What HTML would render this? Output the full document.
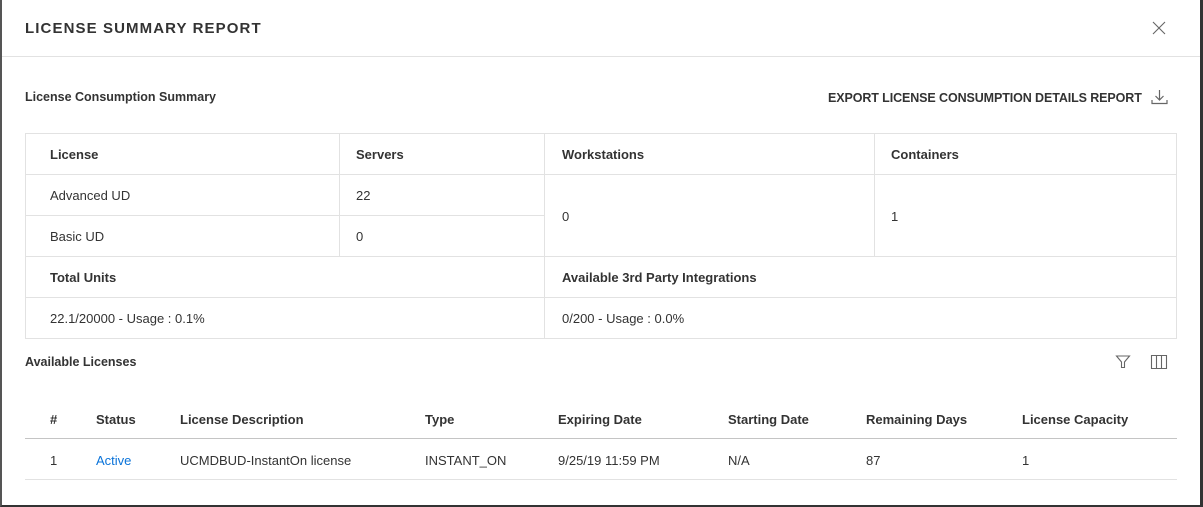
<!DOCTYPE html>
<html><head><style>
*{margin:0;padding:0;box-sizing:border-box}
body{width:1203px;height:507px;background:#fff;font-family:"Liberation Sans",sans-serif;color:#333;position:relative;overflow:hidden;font-size:13px}
.frame{position:absolute;left:0;top:0;width:1203px;height:507px;border-left:2px solid #555;border-right:3px solid #333;border-bottom:2px solid #333}
.a{position:absolute;white-space:nowrap}
.b{font-weight:bold}
.hl{position:absolute;background:#e2e2e2;height:1px}
.vl{position:absolute;background:#e2e2e2;width:1px}
</style></head><body>
<div class="frame"></div>
<div class="a b" style="left:25px;top:20px;font-size:15px;letter-spacing:1.1px;color:#333">LICENSE SUMMARY REPORT</div>
<svg class="a" style="left:1152px;top:21px" width="14" height="14"><path d="M1 1L13 13M13 1L1 13" stroke="#666" stroke-width="1.1"/></svg>
<div class="hl" style="left:2px;top:56px;width:1198px"></div>
<div class="a b" style="left:25px;top:90px;font-size:12.5px">License Consumption Summary</div>
<div class="a b" style="left:828px;top:91px;font-size:12.5px;letter-spacing:-0.1px">EXPORT LICENSE CONSUMPTION DETAILS REPORT</div>
<svg class="a" style="left:1151px;top:89px" width="17" height="16"><path d="M8.5 1V11M4.5 7L8.5 11L12.5 7M1 11V14.5H16V11" stroke="#666" stroke-width="1.2" fill="none"/></svg>
<div style="position:absolute;left:25px;top:133px;width:1152px;height:206px;border:1px solid #e2e2e2"></div>
<div class="hl" style="left:25px;top:174px;width:1152px"></div>
<div class="hl" style="left:25px;top:215px;width:520px"></div>
<div class="hl" style="left:25px;top:256px;width:1152px"></div>
<div class="hl" style="left:25px;top:297px;width:1152px"></div>
<div class="vl" style="left:339px;top:133px;height:124px"></div>
<div class="vl" style="left:544px;top:133px;height:206px"></div>
<div class="vl" style="left:874px;top:133px;height:124px"></div>
<div class="a b" style="left:50px;top:147px">License</div>
<div class="a b" style="left:356px;top:147px">Servers</div>
<div class="a b" style="left:562px;top:147px">Workstations</div>
<div class="a b" style="left:891px;top:147px">Containers</div>
<div class="a" style="left:50px;top:188px">Advanced UD</div>
<div class="a" style="left:356px;top:188px">22</div>
<div class="a" style="left:50px;top:229px">Basic UD</div>
<div class="a" style="left:356px;top:229px">0</div>
<div class="a" style="left:562px;top:209px">0</div>
<div class="a" style="left:891px;top:209px">1</div>
<div class="a b" style="left:50px;top:270px">Total Units</div>
<div class="a b" style="left:562px;top:270px">Available 3rd Party Integrations</div>
<div class="a" style="left:50px;top:311px">22.1/20000 - Usage : 0.1%</div>
<div class="a" style="left:562px;top:311px">0/200 - Usage : 0.0%</div>
<div class="a b" style="left:25px;top:355px;font-size:12.5px">Available Licenses</div>
<svg class="a" style="left:1115px;top:354px" width="16" height="16"><path d="M1.5 2H14.5L9.5 8V13.5H6.5V8Z" stroke="#666" stroke-width="1.1" fill="none"/></svg>
<svg class="a" style="left:1150px;top:354px" width="18" height="16"><path d="M1.5 1.5H16.5V14.5H1.5ZM6.5 1.5V14.5M11.5 1.5V14.5" stroke="#666" stroke-width="1.1" fill="none"/></svg>
<div class="a b" style="left:50px;top:412px">#</div>
<div class="a b" style="left:96px;top:412px">Status</div>
<div class="a b" style="left:180px;top:412px">License Description</div>
<div class="a b" style="left:425px;top:412px">Type</div>
<div class="a b" style="left:558px;top:412px">Expiring Date</div>
<div class="a b" style="left:728px;top:412px">Starting Date</div>
<div class="a b" style="left:866px;top:412px">Remaining Days</div>
<div class="a b" style="left:1022px;top:412px">License Capacity</div>
<div class="hl" style="left:25px;top:438px;width:1152px;background:#c4c4c4"></div>
<div class="a" style="left:50px;top:453px">1</div>
<div class="a" style="left:96px;top:453px;color:#0a73d9">Active</div>
<div class="a" style="left:180px;top:453px">UCMDBUD-InstantOn license</div>
<div class="a" style="left:425px;top:453px">INSTANT_ON</div>
<div class="a" style="left:558px;top:453px">9/25/19 11:59 PM</div>
<div class="a" style="left:728px;top:453px">N/A</div>
<div class="a" style="left:866px;top:453px">87</div>
<div class="a" style="left:1022px;top:453px">1</div>
<div class="hl" style="left:25px;top:479px;width:1152px"></div>
</body></html>
